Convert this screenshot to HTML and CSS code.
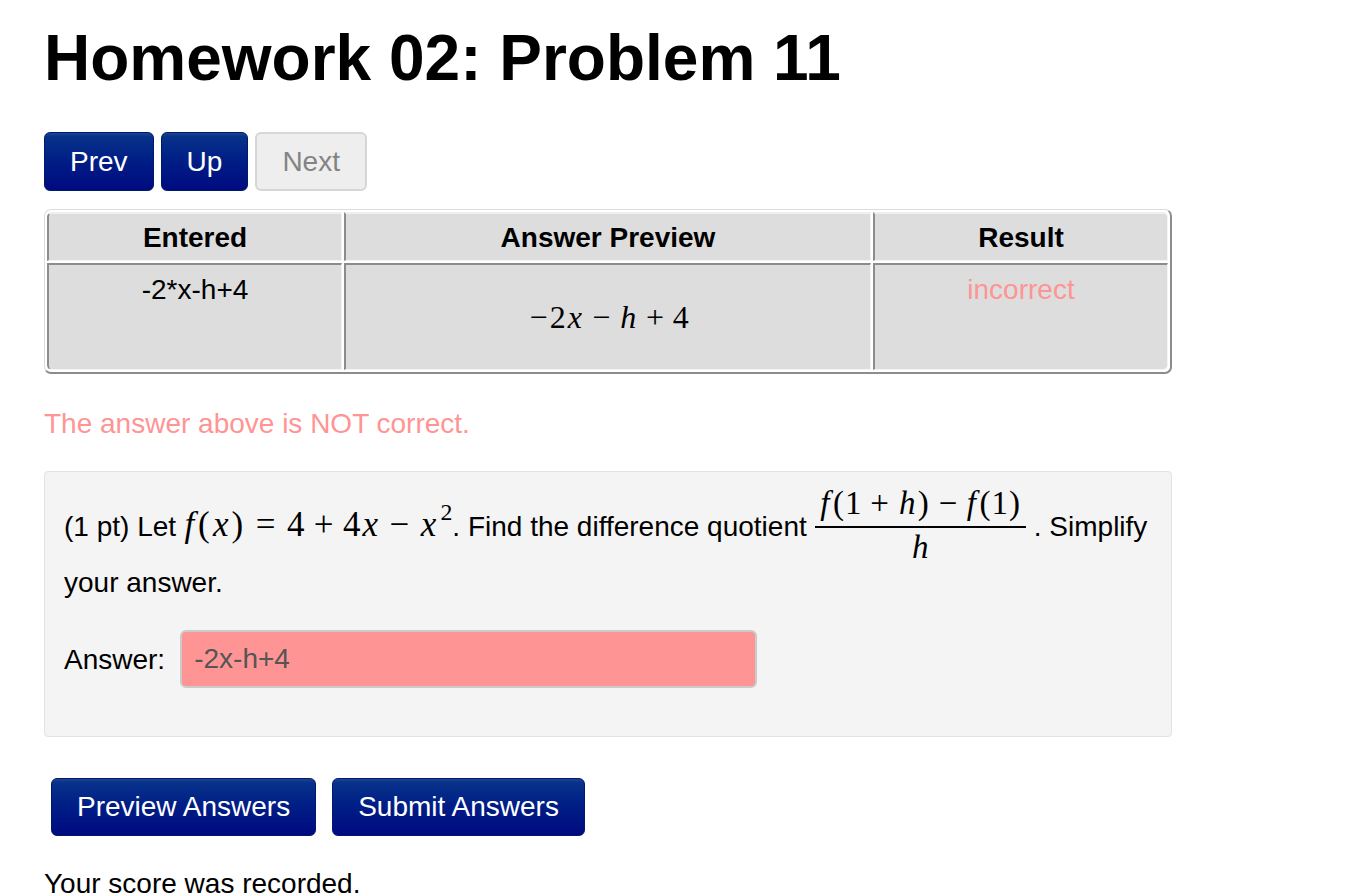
FILE: index.html
```html
<!DOCTYPE html>
<html lang="en">
<head>
<meta charset="utf-8">
<title>Homework 02: Problem 11</title>
<link rel="stylesheet" href="styles.css">
</head>
<body>
<div class="page">
  <h1 class="title">Homework 02: Problem 11</h1>

  <div class="nav">
    <a class="btn">Prev</a>
    <a class="btn">Up</a>
    <span class="btn btn-disabled">Next</span>
  </div>

  <table class="results">
    <thead>
      <tr>
        <th class="col-entered">Entered</th>
        <th class="col-preview">Answer Preview</th>
        <th class="col-result">Result</th>
      </tr>
    </thead>
    <tbody>
      <tr>
        <td class="cell-top">-2*x-h+4</td>
        <td class="cell-mid"><span class="m m-preview"><span class="op">−</span>2<i class="vx">x</i><span class="op bin">−</span><i class="vh">h</i><span class="op bin">+</span>4</span></td>
        <td class="cell-top incorrect">incorrect</td>
      </tr>
    </tbody>
  </table>

  <p class="warn">The answer above is NOT correct.</p>

  <div class="problem">
    <p class="statement">(1 pt) Let <span class="m m-inline"><i class="vf">f</i><span class="pr">(</span><i class="vx">x</i><span class="pr">)</span><span class="op rel">=</span>4<span class="op bin">+</span>4<i class="vx">x</i><span class="op bin">−</span><i class="vx">x</i><sup>2</sup></span>. Find the difference quotient <span class="m frac"><span class="num"><i class="vf">f</i><span class="pr">(</span>1<span class="op bin">+</span><i class="vh">h</i><span class="pr">)</span><span class="op bin">−</span><i class="vf">f</i><span class="pr">(</span>1<span class="pr">)</span></span><span class="den"><i class="vh">h</i></span></span> . Simplify<br>your answer.</p>
    <div class="answer-row">
      <label class="answer-label" for="ans">Answer:</label>
      <input class="answer-input" id="ans" type="text" value="-2x-h+4">
    </div>
  </div>

  <div class="actions">
    <button class="btn btn-big" type="button">Preview Answers</button>
    <button class="btn btn-big" type="button">Submit Answers</button>
  </div>

  <p class="score">Your score was recorded.</p>
</div>
</body>
</html>
```

FILE: styles.css
```css
html, body {
  margin: 0;
  padding: 0;
  background: #ffffff;
}

body {
  font-family: "Liberation Sans", Arial, Helvetica, sans-serif;
  font-size: 28px;
  line-height: 31px;
  color: #000000;
}

.page {
  width: 1128px;
  padding-left: 44px;
}

.title {
  font-size: 64px;
  line-height: 74px;
  font-weight: bold;
  margin: 21px 0 37px;
}

/* buttons */
.nav {
  display: flex;
  gap: 7px;
}

.btn {
  box-sizing: border-box;
  height: 59px;
  padding: 0 25px;
  display: inline-flex;
  align-items: center;
  justify-content: center;
  font-family: "Liberation Sans", Arial, Helvetica, sans-serif;
  font-size: 28px;
  color: #ffffff;
  text-decoration: none;
  background: linear-gradient(to bottom, #1c4494 0%, #08328a 6%, #001f86 45%, #000a80 100%);
  border: 1px solid #001a6a;
  border-radius: 6px;
  cursor: pointer;
}

.btn-disabled {
  background: #eeeeee;
  border: 2px solid #d6d6d6;
  color: #838383;
  padding: 0 25px;
}

/* results table */
.results {
  width: 1128px;
  margin-top: 18px;
  table-layout: fixed;
  border-collapse: separate;
  border-spacing: 2px;
  border-style: solid;
  border-width: 1px 2px 2px 1px;
  border-color: #dcdcdc #8c8c8c #8c8c8c #dcdcdc;
  border-radius: 7px;
}

.results th,
.results td {
  background: #dddddd;
  border-style: solid;
  border-width: 2px 1px 1px 2px;
  border-color: #8c8c8c #f4f4f4 #f4f4f4 #8c8c8c;
  text-align: center;
  padding: 0 10px;
}

.results th {
  height: 32px;
  padding-top: 7px;
  padding-bottom: 7px;
  font-weight: bold;
  border-top-color: #efefef;
}

.results th.col-entered { width: 272px; border-top-left-radius: 5px; }
.results th.col-result { width: 272px; border-top-right-radius: 5px; }

.results td {
  height: 88px;
  padding-top: 9px;
  padding-bottom: 7px;
}

.results td:first-child { border-bottom-left-radius: 5px; }
.results td:last-child { border-bottom-right-radius: 5px; }

.cell-top { vertical-align: top; }
.cell-mid { vertical-align: middle; }

.incorrect { color: #ff9494; }

.warn {
  color: #ff9494;
  margin: 34px 0 32px;
}

/* math (TeX-like metrics) */
.m {
  font-family: "Liberation Serif", "Times New Roman", serif;
  font-size: 33px;
  white-space: nowrap;
}

.m-preview { font-size: 32px; }
.m-inline { font-size: 35px; }

.m i { font-style: italic; }

.op {
  display: inline-block;
  width: 0.7em;
  text-align: center;
}

.rel { margin: 0 0.26em; }
.bin { margin: 0 0.2em; }

.pr { padding: 0 0.03em; }
.vx { padding: 0 0.06em; }
.vh { padding: 0 0.04em; }
.vf { padding: 0 0.08em 0 0.02em; }

.m sup {
  font-size: 0.68em;
  line-height: 0;
  vertical-align: 16px;
  margin-left: 2px;
}

.frac {
  display: inline-flex;
  flex-direction: column;
  align-items: stretch;
  vertical-align: 22px;
  line-height: 36px;
}

.num {
  display: block;
  text-align: center;
  padding: 0 5px 5px;
  border-bottom: 2px solid #000000;
}

.den {
  display: block;
  text-align: center;
  padding-top: 1px;
}

/* problem box */
.problem {
  box-sizing: border-box;
  width: 1128px;
  background: #f4f4f4;
  border: 1px solid #e2e2e2;
  border-radius: 4px;
  padding: 13px 19px 48px;
}

.statement {
  margin: 0;
  line-height: 35px;
  white-space: nowrap;
}

.answer-row {
  display: flex;
  align-items: center;
  margin-top: 30px;
}

.answer-label {
  margin-right: 15px;
}

.answer-input {
  box-sizing: border-box;
  width: 577px;
  height: 58px;
  padding: 0 12px;
  font-family: "Liberation Sans", Arial, Helvetica, sans-serif;
  font-size: 28px;
  color: #555555;
  background: #ff9494;
  border: 2px solid #cbcbcb;
  border-radius: 6px;
  outline: none;
}

/* bottom actions */
.actions {
  display: flex;
  gap: 16px;
  margin: 41px 0 0 7px;
}

.btn-big {
  height: 58px;
  padding: 0 25px;
}

.score {
  margin: 32px 0 0;
}
```
